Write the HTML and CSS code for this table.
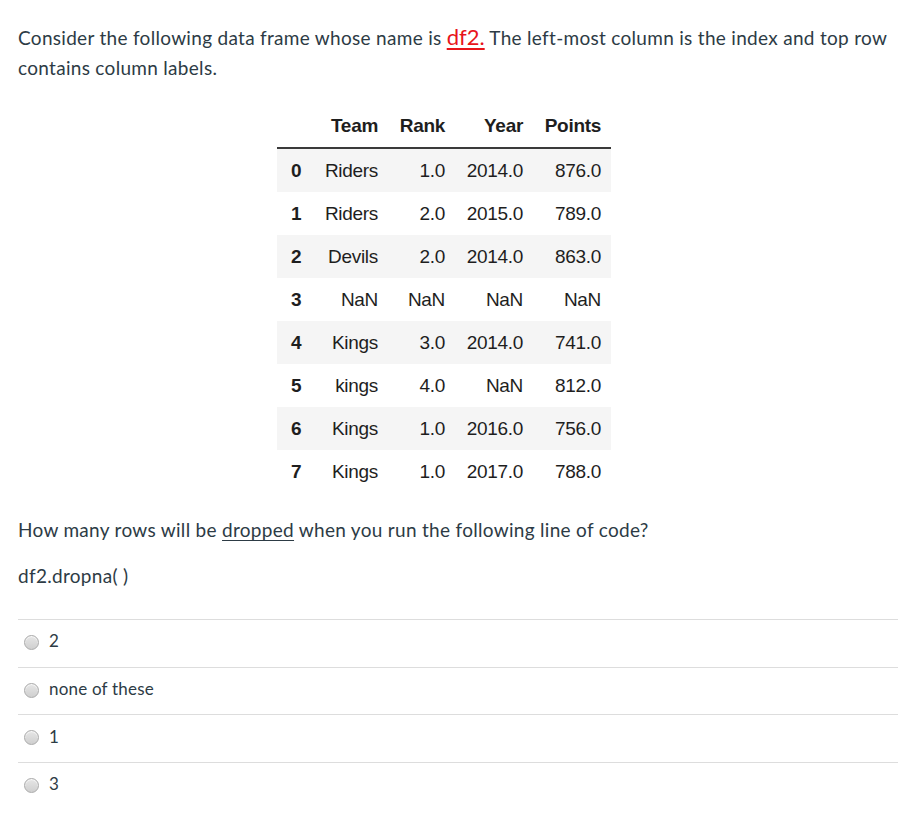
FILE: index.html
```html
<!DOCTYPE html>
<html>
<head>
<meta charset="utf-8">
<link rel="stylesheet" href="styles.css">
</head>
<body>
<div class="question">
  <p class="intro">Consider the following data frame whose name is <span class="hl">df2.</span> The left-most column is the index and top row contains column labels.</p>
  <div class="df-wrap">
    <table class="df">
      <thead>
        <tr><th class="idx"></th><th>Team</th><th>Rank</th><th>Year</th><th>Points</th></tr>
      </thead>
      <tbody>
        <tr><th class="idx">0</th><td>Riders</td><td>1.0</td><td>2014.0</td><td>876.0</td></tr>
        <tr><th class="idx">1</th><td>Riders</td><td>2.0</td><td>2015.0</td><td>789.0</td></tr>
        <tr><th class="idx">2</th><td>Devils</td><td>2.0</td><td>2014.0</td><td>863.0</td></tr>
        <tr><th class="idx">3</th><td>NaN</td><td>NaN</td><td>NaN</td><td>NaN</td></tr>
        <tr><th class="idx">4</th><td>Kings</td><td>3.0</td><td>2014.0</td><td>741.0</td></tr>
        <tr><th class="idx">5</th><td>kings</td><td>4.0</td><td>NaN</td><td>812.0</td></tr>
        <tr><th class="idx">6</th><td>Kings</td><td>1.0</td><td>2016.0</td><td>756.0</td></tr>
        <tr><th class="idx">7</th><td>Kings</td><td>1.0</td><td>2017.0</td><td>788.0</td></tr>
      </tbody>
    </table>
  </div>
  <p class="ask">How many rows will be <u>dropped</u> when you run the following line of code?</p>
  <p class="code">df2.dropna( )</p>
  <div class="answers">
    <label class="answer"><span class="radio"></span><span>2</span></label>
    <label class="answer"><span class="radio"></span><span>none of these</span></label>
    <label class="answer"><span class="radio"></span><span>1</span></label>
    <label class="answer"><span class="radio"></span><span>3</span></label>
  </div>
</div>
</body>
</html>
```
FILE: styles.css
```css
html, body {
  margin: 0;
  padding: 0;
  background: #fff;
}
body {
  font-family: Lato, "Open Sans", sans-serif;
  color: #2d3b45;
  font-size: 19px;
  letter-spacing: 0.3px;
}
.question {
  padding: 23px 14px 0 18px;
}
.intro {
  margin: 0;
  line-height: 30px;
}
.hl {
  color: #e8141b;
  font-size: 22px;
  line-height: 20px;
  letter-spacing: 0;
  text-decoration: underline;
  text-decoration-thickness: 2px;
  text-underline-offset: 3px;
}
.df-wrap {
  margin: 21px 0 0 259px;
}
.df {
  border-collapse: collapse;
  font-family: "Liberation Sans", Arial, sans-serif;
  font-size: 19px;
  letter-spacing: -0.3px;
  color: #1e1e1e;
}
.df th, .df td {
  height: 43px;
  padding: 0 10px 0 0;
  text-align: right;
  font-weight: normal;
}
.df thead th {
  font-weight: bold;
  height: 43px;
  border-bottom: 2px solid #3a3a3a;
  vertical-align: middle;
}
.df th.idx {
  text-align: left;
  padding-left: 14px;
  width: 11px;
  font-weight: bold;
}
.df td:nth-child(2) { width: 66px; }
.df td:nth-child(3) { width: 57px; }
.df td:nth-child(4) { width: 68px; }
.df td:nth-child(5) { width: 68px; }
.df tbody tr:nth-child(odd) { background: #f5f5f5; }
.ask {
  margin: 25px 0 0;
  line-height: 24px;
}
.ask u {
  text-underline-offset: 3px;
}
.code {
  margin: 22px 0 0;
  line-height: 24px;
}
.answers {
  margin-top: 31px;
  width: 880px;
}
.answer {
  display: flex;
  align-items: center;
  gap: 10px;
  border-top: 1px solid #ddd;
  padding-left: 6px;
  padding-bottom: 5px;
  box-sizing: border-box;
  height: 47.7px;
  font-size: 17px;
  letter-spacing: 0.2px;
}
.radio {
  width: 13px;
  height: 13px;
  border-radius: 50%;
  border: 1px solid #aaa;
  background: linear-gradient(#e6e6e6, #cfcfcf);
  box-shadow: inset 0 1px 1px rgba(255,255,255,0.8);
  margin-top: 3px;
}
```
